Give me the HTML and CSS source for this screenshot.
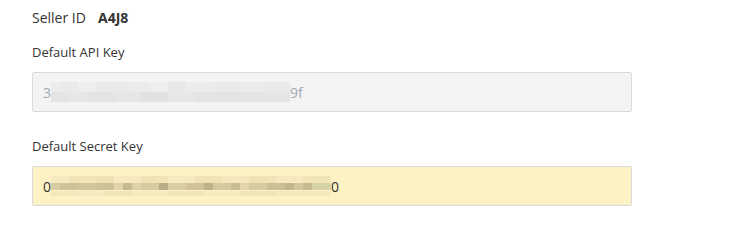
FILE: index.html
```html
<!DOCTYPE html>
<html lang="en">
<head>
  <meta charset="UTF-8" />
  <title>Seller keys</title>
  <link rel="stylesheet" href="styles.css">
</head>
<body>
  <div class="keys">
    <div class="seller">
      <span class="seller-label">Seller ID</span>
      <span class="seller-id">A4J8</span>
    </div>

    <div class="field">
      <label class="field-label">Default API Key</label>
      <div class="key-box api-key">3<span class="mosaic mosaic-api"></span>9f</div>
    </div>

    <div class="field">
      <label class="field-label">Default Secret Key</label>
      <div class="key-box secret-key">0<span class="mosaic mosaic-secret"></span>0</div>
    </div>
  </div>
</body>
</html>
```

FILE: styles.css
```css
body {
  margin: 0;
  font-family: "Open Sans", "Noto Sans", sans-serif;
  font-size: 13px;
  color: #333;
  background: #fff;
}

.keys {
  padding: 9px 0 0 32px;
  width: 600px;
}

.seller {
  display: flex;
  font-size: 14px;
  line-height: 18px;
}

.seller-label {
  width: 66px;
}

.seller-id {
  font-weight: 700;
}

.field {
  margin-top: 16px;
}

.field + .field {
  margin-top: 25px;
}

.field-label {
  display: block;
  line-height: 18px;
  margin-bottom: 11px;
}

.key-box {
  height: 38px;
  border: 1px solid #d9d9d9;
  border-radius: 2px;
  padding: 0 10px;
  display: flex;
  align-items: center;
  font-size: 14px;
}

.api-key {
  background: #f3f3f3;
  color: #a3a9b3;
}

.secret-key {
  background: #fdf2c4;
  color: #333;
}

.mosaic {
  display: inline-block;
  height: 20px;
}

.mosaic-api {
  width: 239px;
  background:
    linear-gradient(90deg,
      #ececec 0 9px, #eaeaea 9px 27px, #eeeeee 27px 45px, #e9e9e9 45px 72px,
      #ebebeb 72px 99px, #eeeeee 99px 117px, #e8e8e8 117px 135px, #ececec 135px 162px,
      #eaeaea 162px 189px, #ebebeb 189px 216px, #e9e9e9 216px 239px) top / 100% 10px no-repeat,
    linear-gradient(90deg,
      #e4e4e4 0 18px, #e7e7e7 18px 36px, #e3e3e3 36px 63px, #e6e6e6 63px 90px,
      #e2e2e2 90px 117px, #e7e7e7 117px 144px, #e4e4e4 144px 171px, #e3e3e3 171px 198px,
      #e5e5e5 198px 239px) bottom / 100% 10px no-repeat;
}

.mosaic-secret {
  width: 280px;
  background:
    linear-gradient(90deg,
      #f6ebc0 0 18px, #f1e4b7 18px 45px, #efe1b3 45px 63px, #f5e9bd 63px 90px,
      #f0e3b5 90px 117px, #f6eabf 117px 144px, #efe2b4 144px 171px, #f4e8bc 171px 198px,
      #f0e2b4 198px 225px, #f5e9bd 225px 252px, #f1e4b7 252px 280px) top / 100% 7px no-repeat,
    linear-gradient(90deg,
      #d8cca2 0 9px, #cfc39b 9px 27px, #d2c69e 27px 45px, #cdc199 45px 63px,
      #e0d4a8 63px 72px, #c5b991 72px 81px, #ddd1a6 81px 90px, #d6ca9f 90px 108px,
      #b9ad88 108px 117px, #d9cda3 117px 135px, #d0c39c 135px 153px, #beb28b 153px 162px,
      #d5c99f 162px 180px, #c8bc94 180px 189px, #e2d6aa 189px 198px, #d7cba1 198px 216px,
      #cbbf97 216px 234px, #c2b68e 234px 243px, #d3c79e 243px 252px, #c6ba93 252px 261px,
      #d8d2a8 261px 280px) center / 100% 8px no-repeat,
    linear-gradient(90deg,
      #f3e7bb 0 27px, #f6ebc0 27px 54px, #f1e5b8 54px 81px, #f5e9bd 81px 117px,
      #f2e5b8 117px 153px, #f6eabf 153px 189px, #f1e4b7 189px 225px, #f4e8bc 225px 280px) bottom / 100% 5px no-repeat;
}
```
